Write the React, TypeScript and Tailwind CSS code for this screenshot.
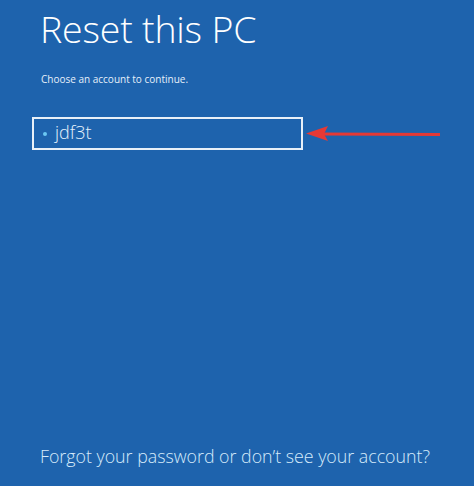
import React from 'react';

const App: React.FC = () => {
  return (
    <div className="relative w-[474px] h-[486px] bg-[#1e63ad] overflow-hidden font-['Open_Sans',sans-serif] text-white">
      <div className="flex flex-col h-full pl-[40px]">
        {/* Title */}
        <h1 className="mt-[3px] text-[37.5px] font-light leading-[52px] tracking-[-0.2px]">Reset this PC</h1>
        <p className="mt-[17px] ml-[1px] text-[10px] leading-[14px] text-[#e6f0fa]">Choose an account to continue.</p>

        {/* Account tile */}
        <div className="mt-[31px] -ml-[8px] w-[271px] h-[33px] border-2 border-[#e8f0f8] flex items-center pl-[9px]">
          <span className="w-[4px] h-[4px] rounded-full bg-[#6cc8f2]"></span>
          <span className="ml-[8px] text-[18px] font-light leading-none text-[#e4f1fc] -mt-[3px]">jdf3t</span>
        </div>

        <div className="flex-1"></div>

        {/* Bottom link */}
        <p className="mb-[18px] text-[17.8px] font-light leading-[24px] text-[#d6ebfb]">
          Forgot your password or don’t see your account?
        </p>
      </div>

      {/* Red annotation arrow */}
      <svg className="absolute left-[300px] top-[120px]" width="150" height="28" viewBox="0 0 150 28">
        <line x1="20" y1="14" x2="140" y2="14.5" stroke="#e53935" strokeWidth="3" />
        <path d="M6 13.5 L28 6 L24 14 L28 21 Z" fill="#e53935" />
      </svg>
    </div>
  );
};

export default App;
